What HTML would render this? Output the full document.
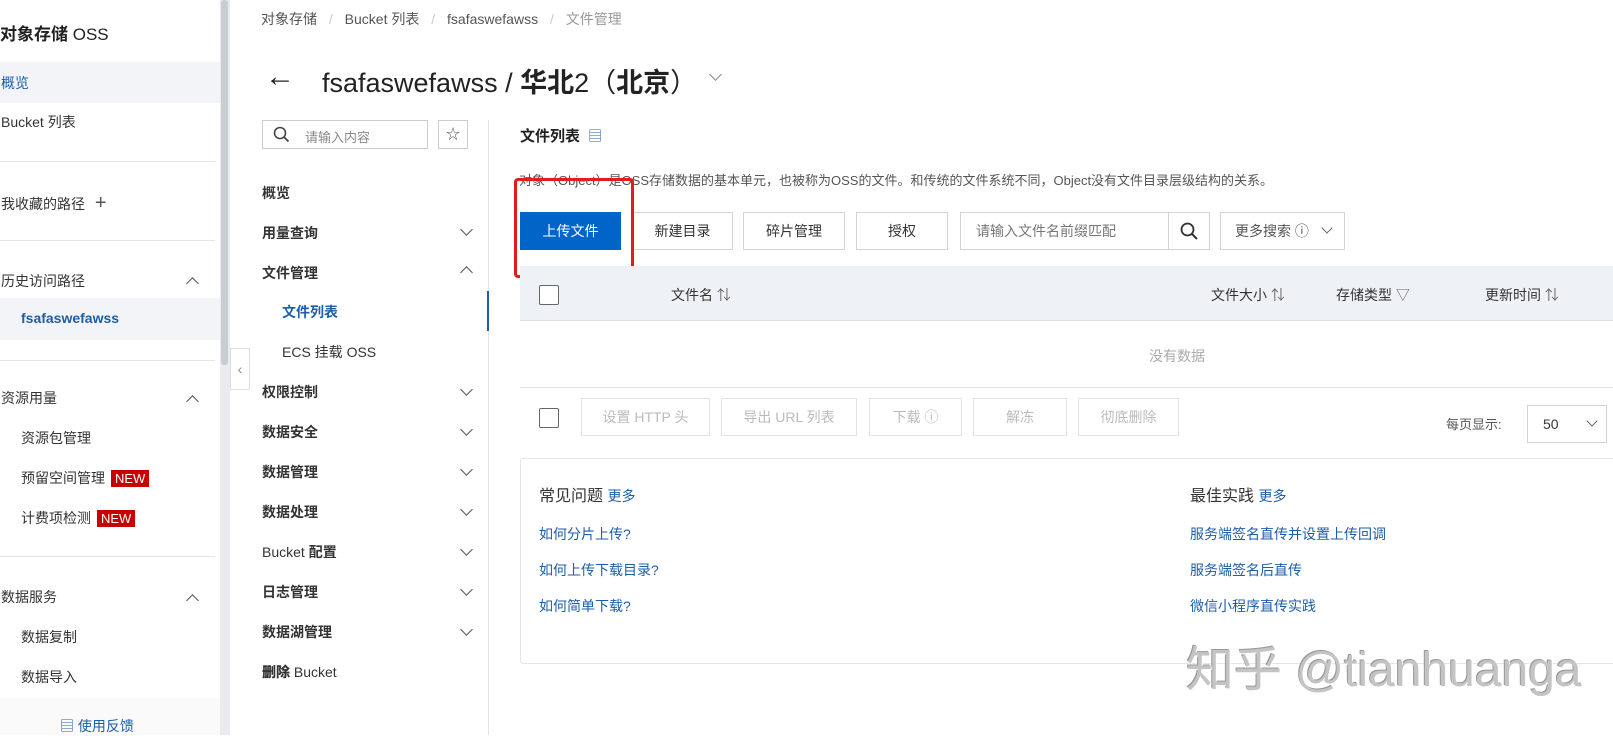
<!DOCTYPE html>
<html><head><meta charset="utf-8"><style>
*{margin:0;padding:0;box-sizing:border-box}
body{width:1613px;height:735px;overflow:hidden;background:#fff;font-family:"Liberation Sans","Noto Sans CJK SC",sans-serif;color:#333;font-size:14px;position:relative}
.a{position:absolute;white-space:nowrap}
.sb{position:absolute;left:0;top:0;width:220px;height:735px;background:#fff}
.hl{position:absolute;left:0;width:220px;background:#f2f4f7}
.dv{position:absolute;left:0;width:215px;height:1px;background:#e5e5e5}
.new{background:#c80000;color:#fff;font-size:13px;padding:1px 4px;margin-left:6px}
.chev{position:absolute;width:9px;height:9px;border-right:1.5px solid #555;border-bottom:1.5px solid #555}
.up{transform:rotate(-135deg)}
.dn{transform:rotate(45deg)}
.nav{position:absolute;left:262px;font-weight:bold;font-size:14px;color:#333}
.btn{position:absolute;height:38px;border:1px solid #d3d3d3;background:#fff;text-align:center;line-height:36px;font-size:14px;color:#333}
.dis{color:#bbb;border-color:#e3e3e3}
.cb{position:absolute;width:20px;height:20px;border:1.5px solid #666;border-radius:2px;background:#fff}
.lk{position:absolute;color:#1d5ea8;font-size:14px;white-space:nowrap}
</style></head><body>
<div class="sb"></div>
<div class="a" style="left:0;top:20px;font-size:17px;font-weight:bold;color:#222">对象存储 <span style="font-weight:normal">OSS</span></div>
<div class="hl" style="top:62px;height:41px"></div>
<div class="a" style="left:1px;top:73px;color:#1d5ea8">概览</div>
<div class="a" style="left:1px;top:112px">Bucket 列表</div>
<div class="dv" style="top:161px"></div>
<div class="a" style="left:1px;top:192px">我收藏的路径 <span style="font-size:20px;margin-left:6px;color:#555">+</span></div>
<div class="dv" style="top:240px"></div>
<div class="a" style="left:1px;top:271px">历史访问路径</div>
<div class="chev up" style="left:188px;top:279px"></div>
<div class="hl" style="top:298px;height:42px"></div>
<div class="a" style="left:21px;top:310px;font-weight:bold;color:#1d5ea8">fsafaswefawss</div>
<div class="dv" style="top:360px"></div>
<div class="a" style="left:1px;top:388px">资源用量</div>
<div class="chev up" style="left:188px;top:397px"></div>
<div class="a" style="left:21px;top:428px">资源包管理</div>
<div class="a" style="left:21px;top:468px">预留空间管理<span class="new">NEW</span></div>
<div class="a" style="left:21px;top:508px">计费项检测<span class="new">NEW</span></div>
<div class="dv" style="top:556px"></div>
<div class="a" style="left:1px;top:587px">数据服务</div>
<div class="chev up" style="left:188px;top:596px"></div>
<div class="a" style="left:21px;top:627px">数据复制</div>
<div class="a" style="left:21px;top:667px">数据导入</div>
<div style="position:absolute;left:0;top:698px;width:220px;height:37px;background:#fafafa"></div>
<div class="a" style="left:60px;top:716px;color:#1d5ea8">▤ 使用反馈</div>
<div style="position:absolute;left:220px;top:0;width:10px;height:735px;background:#e9ebee"></div>
<div style="position:absolute;left:221px;top:0;width:7px;height:365px;background:#c9ccd1;border-radius:3px"></div>
<div style="position:absolute;left:230px;top:348px;width:20px;height:42px;border:1px solid #ddd;background:#fff;color:#888;text-align:center;line-height:40px">‹</div>

<div class="a" style="left:261px;top:9px;font-size:14px;color:#555">对象存储 <span style="color:#ccc;margin:0 8px">/</span> Bucket 列表 <span style="color:#ccc;margin:0 8px">/</span> fsafaswefawss <span style="color:#ccc;margin:0 8px">/</span> <span style="color:#999">文件管理</span></div>
<div class="a" style="left:265px;top:60px;font-size:30px;color:#222">←</div>
<div class="a" style="left:322px;top:61px;font-size:27px;color:#222">fsafaswefawss / <b>华北</b>2（<b>北京</b>）</div>
<div class="chev dn" style="left:711px;top:70px;border-color:#888"></div>

<div style="position:absolute;left:262px;top:120px;width:166px;height:29px;border:1px solid #ccc"></div>
<svg class="a" style="left:273px;top:126px" width="17" height="17" viewBox="0 0 17 17"><circle cx="7" cy="7" r="5.5" fill="none" stroke="#444" stroke-width="1.6"/><path d="M11 11l4.5 4.5" stroke="#444" stroke-width="1.8"/></svg>
<div class="a" style="left:305px;top:127px;color:#888;font-size:13px">请输入内容</div>
<div style="position:absolute;left:438px;top:120px;width:30px;height:29px;border:1px solid #ccc;text-align:center;line-height:27px;color:#555">☆</div>
<div style="position:absolute;left:488px;top:120px;width:1px;height:615px;background:#e3e3e3"></div>
<div style="position:absolute;left:487px;top:291px;width:2px;height:40px;background:#1d5ea8"></div>
<div class="nav" style="top:183px">概览</div>
<div class="nav" style="top:223px">用量查询</div><div class="chev dn" style="left:462px;top:225px"></div>
<div class="nav" style="top:263px">文件管理</div><div class="chev up" style="left:462px;top:268px"></div>
<div class="nav" style="left:282px;top:302px;color:#1d5ea8">文件列表</div>
<div class="nav" style="left:282px;top:342px;font-weight:normal">ECS 挂载 OSS</div>
<div class="nav" style="top:382px">权限控制</div><div class="chev dn" style="left:462px;top:385px"></div>
<div class="nav" style="top:422px">数据安全</div><div class="chev dn" style="left:462px;top:425px"></div>
<div class="nav" style="top:462px">数据管理</div><div class="chev dn" style="left:462px;top:465px"></div>
<div class="nav" style="top:502px">数据处理</div><div class="chev dn" style="left:462px;top:505px"></div>
<div class="nav" style="top:542px;font-weight:normal">Bucket <b>配置</b></div><div class="chev dn" style="left:462px;top:545px"></div>
<div class="nav" style="top:582px">日志管理</div><div class="chev dn" style="left:462px;top:585px"></div>
<div class="nav" style="top:622px">数据湖管理</div><div class="chev dn" style="left:462px;top:625px"></div>
<div class="nav" style="top:662px"><b>删除</b> <span style="font-weight:normal">Bucket</span></div>

<div class="a" style="left:520px;top:125px;font-size:15px;font-weight:bold;color:#222">文件列表 <span style="color:#1d5ea8;font-weight:normal;font-size:14px;margin-left:4px">▤</span></div>
<div class="a" style="left:519px;top:170px;font-size:13px;color:#555">对象（Object）是OSS存储数据的基本单元，也被称为OSS的文件。和传统的文件系统不同，Object没有文件目录层级结构的关系。</div>
<div class="btn" style="left:520px;top:212px;width:101px;background:#0064c8;border-color:#0064c8;color:#fff">上传文件</div>
<div class="btn" style="left:632px;top:212px;width:101px">新建目录</div>
<div class="btn" style="left:743px;top:212px;width:102px">碎片管理</div>
<div class="btn" style="left:856px;top:212px;width:92px">授权</div>
<div class="btn" style="left:960px;top:212px;width:210px;text-align:left;padding-left:15px;color:#777">请输入文件名前缀匹配</div>
<div class="btn" style="left:1168px;top:212px;width:42px"></div>
<svg class="a" style="left:1180px;top:222px" width="18" height="18" viewBox="0 0 18 18"><circle cx="7.5" cy="7.5" r="6" fill="none" stroke="#333" stroke-width="1.8"/><path d="M12 12l5 5" stroke="#333" stroke-width="2"/></svg>
<div class="btn" style="left:1220px;top:212px;width:125px;color:#555;text-align:left;padding-left:14px">更多搜索 ⓘ</div>
<div class="chev dn" style="left:1323px;top:224px;width:8px;height:8px;border-color:#666"></div>
<div style="position:absolute;left:514px;top:178px;width:120px;height:100px;border:3px solid #e51c1c;border-radius:4px"></div>

<div style="position:absolute;left:520px;top:266px;width:1093px;height:55px;background:#eef1f6;border-bottom:1px solid #e0e0e0"></div>
<div class="cb" style="left:539px;top:285px"></div>
<div class="a" style="left:671px;top:285px">文件名 <span style="color:#666">⇅</span></div>
<div class="a" style="left:1211px;top:285px">文件大小 <span style="color:#666">⇅</span></div>
<div class="a" style="left:1336px;top:285px">存储类型 <span style="color:#666">▽</span></div>
<div class="a" style="left:1485px;top:285px">更新时间 <span style="color:#666">⇅</span></div>
<div class="a" style="left:1149px;top:346px;color:#aaa">没有数据</div>
<div style="position:absolute;left:520px;top:387px;width:1093px;height:1px;background:#e3e3e3"></div>
<div class="cb" style="left:539px;top:408px"></div>
<div class="btn dis" style="left:581px;top:398px;width:129px">设置 HTTP 头</div>
<div class="btn dis" style="left:721px;top:398px;width:136px">导出 URL 列表</div>
<div class="btn dis" style="left:869px;top:398px;width:93px">下载 ⓘ</div>
<div class="btn dis" style="left:973px;top:398px;width:94px">解冻</div>
<div class="btn dis" style="left:1078px;top:398px;width:101px">彻底删除</div>
<div class="a" style="left:1446px;top:414px;color:#555;font-size:13px">每页显示:</div>
<div class="btn" style="left:1527px;top:405px;width:80px;text-align:left;padding-left:15px">50</div>
<div class="chev dn" style="left:1588px;top:417px;width:8px;height:8px;border-color:#666"></div>

<div style="position:absolute;left:520px;top:458px;width:1100px;height:206px;border:1px solid #e5e5e5;border-radius:3px"></div>
<div class="a" style="left:539px;top:482px;font-size:16px;color:#333">常见问题 <span style="color:#1d5ea8;font-size:14px">更多</span></div>
<div class="lk" style="left:539px;top:524px">如何分片上传?</div>
<div class="lk" style="left:539px;top:560px">如何上传下载目录?</div>
<div class="lk" style="left:539px;top:596px">如何简单下载?</div>
<div class="a" style="left:1190px;top:482px;font-size:16px;color:#333">最佳实践 <span style="color:#1d5ea8;font-size:14px">更多</span></div>
<div class="lk" style="left:1190px;top:524px">服务端签名直传并设置上传回调</div>
<div class="lk" style="left:1190px;top:560px">服务端签名后直传</div>
<div class="lk" style="left:1190px;top:596px">微信小程序直传实践</div>
<div class="a" style="left:1186px;top:630px;font-size:48px;color:#c4c4c4;text-shadow:1px 1px 0 #fff,-1px -1px 0 #999">知乎 @tianhuanga</div>
</body></html>
